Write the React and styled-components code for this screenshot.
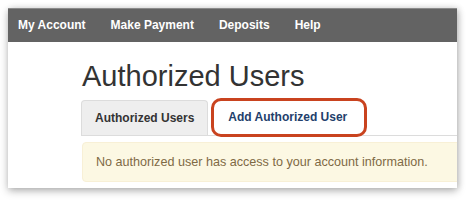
import React from "react";
import styled, { createGlobalStyle } from "styled-components";

const Global = createGlobalStyle`
    html, body {
        margin: 0;
        padding: 0;
        background: #fff;
        font-family: "Liberation Sans", Arial, sans-serif;
    }
`;

const Page = styled.div`
    padding: 8px 17px 18px 8px;
`;

const Card = styled.div`
    width: 449px;
    background: #fff;
    overflow: hidden;
    box-shadow: 0 3px 8px rgba(0, 0, 0, 0.28), 2px 0 6px rgba(0, 0, 0, 0.12);
`;

const Nav = styled.nav`
    height: 34px;
    background: #636363;
    border-top: 1px solid #8a8a8a;
    box-sizing: border-box;
    display: flex;
    align-items: center;
    gap: 25px;
    padding: 0 0 1px 10px;
`;

const NavItem = styled.a`
    color: #fff;
    font-size: 12px;
    font-weight: bold;
    text-decoration: none;
`;

const Content = styled.div`
    padding: 20px 0 6px 74px;
`;

const Title = styled.h1`
    margin: 0;
    font-size: 29px;
    line-height: 29px;
    font-weight: normal;
    color: #333;
`;

const Tabs = styled.div`
    display: flex;
    align-items: flex-end;
    margin: 9px 0 0 -1px;
    border-bottom: 1px solid #dcdcdc;
    height: 35px;
`;

const Tab = styled.div`
    box-sizing: border-box;
    display: flex;
    align-items: center;
    font-size: 12px;
    font-weight: bold;
    white-space: nowrap;
    ${(p) =>
        p.$highlight
            ? `
        height: 39px;
        margin: 0 0 -2px 3px;
        padding: 0 17px 1px 14px;
        border: 3px solid #c9431f;
        border-radius: 10px;
        background: #fff;
        color: #23406b;
    `
            : `
        height: 35px;
        padding: 0 13px 0;
        background: #eeeeee;
        border: 1px solid #dcdcdc;
        border-bottom: none;
        border-radius: 4px 4px 0 0;
        color: #333;
    `}
`;

const Alert = styled.div`
    margin-top: 6px;
    height: 40px;
    box-sizing: border-box;
    display: flex;
    align-items: center;
    padding: 0 13px;
    margin-right: -6px;
    background: #fcf8e3;
    border: 1px solid #f8f0d6;
    border-radius: 4px;
    color: #7f6a45;
    font-size: 12.6px;
    white-space: nowrap;
`;

export default () => (
    <Page>
        <Global />
        <Card>
            <Nav>
                <NavItem href="#">My Account</NavItem>
                <NavItem href="#">Make Payment</NavItem>
                <NavItem href="#">Deposits</NavItem>
                <NavItem href="#">Help</NavItem>
            </Nav>
            <Content>
                <Title>Authorized Users</Title>
                <Tabs>
                    <Tab>Authorized Users</Tab>
                    <Tab $highlight>Add Authorized User</Tab>
                </Tabs>
                <Alert>No authorized user has access to your account information.</Alert>
            </Content>
        </Card>
    </Page>
);
